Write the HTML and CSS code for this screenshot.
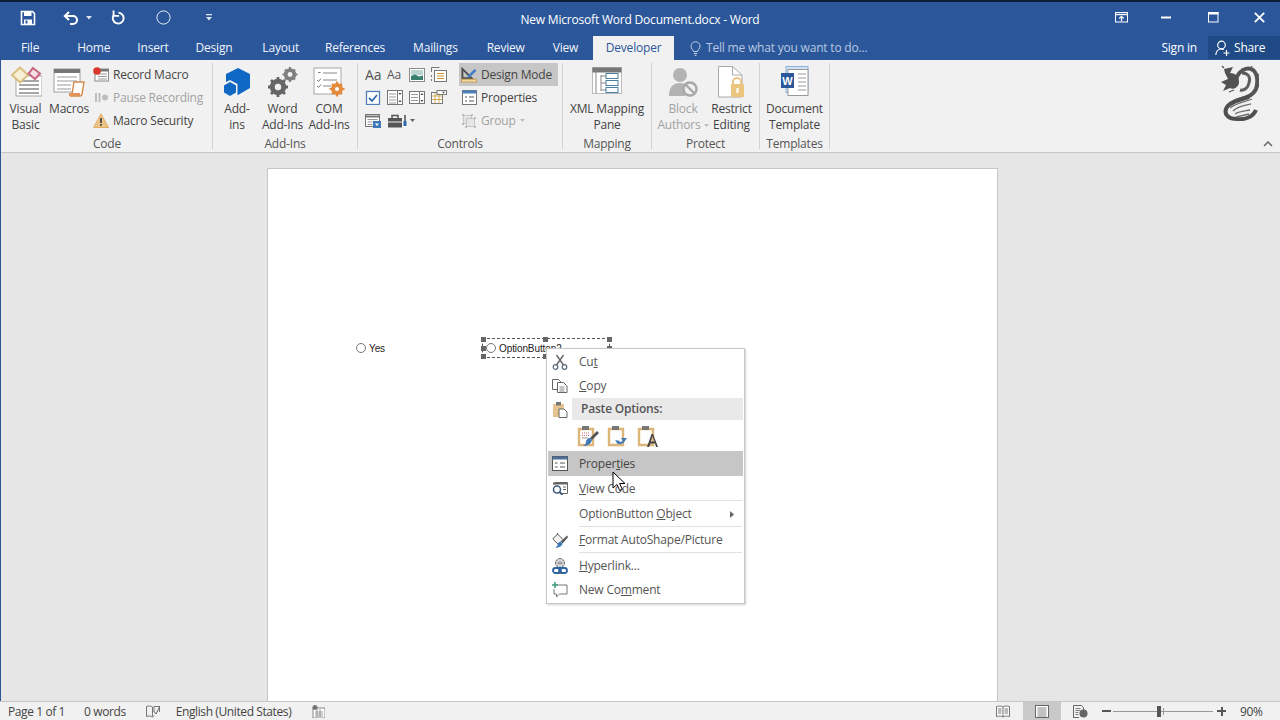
FILE: index.html
```html
<!DOCTYPE html>
<html lang="en">
<head>
<meta charset="utf-8">
<title>New Microsoft Word Document.docx - Word</title>
<link rel="stylesheet" href="styles.css">
</head>
<body>
<div class="app">
  <header class="titlebar">
    <div class="qat">
      <svg class="q q-save" width="16" height="16" viewBox="0 0 16 16"><path d="M1.5 1.5h11l2 2v11h-13z" fill="none" stroke="#fff" stroke-width="1.6"/><rect x="4" y="1.5" width="7.5" height="4.5" fill="#fff"/><rect x="4" y="9.5" width="8" height="5" fill="#fff"/><rect x="5.5" y="10.5" width="2" height="3" fill="#2b579a"/></svg>
      <svg class="q q-undo" width="16" height="14" viewBox="0 0 16 14"><path d="M6 1 1.800 5 6 9M2 5h8a4 4 0 0 1 0 8H7" fill="none" stroke="#fff" stroke-width="2"/></svg>
      <svg class="q q-drop" width="6" height="4" viewBox="0 0 6 4"><path d="M0 0h6L3 3.500z" fill="#dfe6f2"/></svg>
      <svg class="q q-redo" width="14" height="15" viewBox="0 0 14 15"><path d="M7.500 2.800A5.400 5.400 0 1 1 2.600 5.400" fill="none" stroke="#fff" stroke-width="1.900"/><path d="M1.600 .5h1.900v4.400h4.600v1.900H1.600z" fill="#fff"/></svg>
      <svg class="q q-circle" width="15" height="15" viewBox="0 0 15 15"><circle cx="7.500" cy="7.500" r="6.600" fill="none" stroke="#e4eaf4" stroke-width="1"/></svg>
      <svg class="q q-cust" width="6" height="7" viewBox="0 0 6 7"><path d="M0 0h6v1.200H0zM0 3h6L3 6.500z" fill="#dfe6f2"/></svg>
    </div>
    <div class="doc-title">New Microsoft Word Document.docx - Word</div>
    <div class="winctl">
      <svg width="14" height="11" viewBox="0 0 14 11"><rect x=".5" y=".5" width="12" height="9.500" fill="none" stroke="#fff"/><path d="M.5 2.500h12" stroke="#fff" stroke-width="1.400"/><path d="M6.500 9.500V4.500M4.300 6.500l2.200-2.200 2.200 2.200" fill="none" stroke="#fff" stroke-width="1.200"/></svg>
      <svg width="10" height="3" viewBox="0 0 10 3"><rect width="10" height="2" y=".5" fill="#fff"/></svg>
      <svg width="11" height="11" viewBox="0 0 11 11"><rect x=".5" y=".5" width="9.500" height="9.500" fill="none" stroke="#fff"/><rect x="0" y="0" width="10.500" height="2.500" fill="#fff"/></svg>
      <svg width="11" height="11" viewBox="0 0 11 11"><path d="M.8.800l9.400 9.400M10.200.800.800 10.200" stroke="#fff" stroke-width="1.800"/></svg>
    </div>
  </header>
  <nav class="tabs">
    <span class="tab t-file">File</span>
    <span class="tab t-home">Home</span>
    <span class="tab t-insert">Insert</span>
    <span class="tab t-design">Design</span>
    <span class="tab t-layout">Layout</span>
    <span class="tab t-ref">References</span>
    <span class="tab t-mail">Mailings</span>
    <span class="tab t-review">Review</span>
    <span class="tab t-view">View</span>
    <span class="tab active">Developer</span>
    <svg class="bulb" width="11" height="15" viewBox="0 0 11 15"><path d="M3.500 10.500C3 8.500 1 7.800 1 5.200a4.500 4.500 0 0 1 9 0c0 2.600-2 3.300-2.500 5.300zM3.800 12.500h3.400M4.500 14.300h2" fill="none" stroke="#c3d0e6" stroke-width="1"/></svg>
    <span class="tell">Tell me what you want to do...</span>
    <span class="signin">Sign in</span>
    <span class="share"><svg width="15" height="16" viewBox="0 0 15 16"><circle cx="6.500" cy="5" r="3.800" fill="none" stroke="#fff" stroke-width="1.200"/><path d="M.8 15c.3-3.700 2.300-6 5.700-6 1 0 1.800.2 2.500.6M8.500 13h6M11.500 10v6" fill="none" stroke="#fff" stroke-width="1.200"/></svg>Share</span>
  </nav>
  <section class="ribbon">
    <div class="group g-code">
      <div class="gbody">
        <div class="big w-vb">
          <svg class="ico" width="32" height="32" viewBox="0 0 32 32"><rect x="6" y="10" width="26" height="20" fill="#fff" stroke="#a8a8a8"/><path d="M9 15h20M9 19h20M9 23h20M9 27h20" stroke="#8a8a8a" stroke-width="1.500"/><path d="M10 1.500 18 9 10 16.500 2 9z" fill="#f7efd6" stroke="#d9bf7d" stroke-width="2"/><path d="M23 2l7 5.500-5 5.500-6.500-5.500z" fill="#f6dfe4" stroke="#c8677f" stroke-width="2"/></svg>
          <span>Visual<br>Basic</span>
        </div>
        <div class="big w-mac">
          <svg class="ico" width="32" height="32" viewBox="0 0 32 32"><rect x="1" y="3" width="26" height="23" fill="#fff" stroke="#a0a0a0"/><rect x="1" y="3" width="26" height="4" fill="#777"/><path d="M4 11h20M4 15h20M4 19h14M4 23h14" stroke="#999" stroke-width="1.200"/><path d="M21 16h10l-2 12c-.2 1-1 2-2 2H17c1-.5 1.800-1 2-2z" fill="#fff" stroke="#d68a4a" stroke-width="1.400"/><rect x="16" y="27" width="11" height="3" fill="#e2955b"/></svg>
          <span>Macros</span>
        </div>
        <div class="stack">
          <div class="row"><svg width="16" height="15" viewBox="0 0 16 15"><rect x="2" y="2" width="13.500" height="12" fill="#fff" stroke="#8a8a8a"/><rect x="2" y="2" width="13.500" height="2.500" fill="#777"/><path d="M5 7h9M5 9.500h9M5 12h9" stroke="#999"/><circle cx="4" cy="4" r="3.800" fill="#d9372c"/></svg><span>Record Macro</span></div>
          <div class="row off"><svg width="16" height="15" viewBox="0 0 16 15"><path d="M2 3h2v9H2zM5.500 3h2v9h-2z" fill="#bdbdbd"/><circle cx="12" cy="7.500" r="3" fill="#bdbdbd"/></svg><span>Pause Recording</span></div>
          <div class="row"><svg width="16" height="15" viewBox="0 0 16 15"><path d="M8 .8 15.500 14.500H.5z" fill="#ecc486" stroke="#e0ad63"/><path d="M7.100 5h1.800v5H7.100zM7.100 11h1.800v1.800H7.100z" fill="#444"/></svg><span>Macro Security</span></div>
        </div>
      </div>
      <div class="glabel">Code</div>
    </div>
    <div class="group g-addins">
      <div class="gbody">
        <div class="big w-addin">
          <svg class="ico" width="32" height="32" viewBox="0 0 32 32"><path d="M17 2 29 8v14l-12 7-.5-.3V18L9 14l-4 2V8z" fill="#0f68c4"/><path d="M9 16l6 3.500v7L9 30l-6-3.500v-7z" fill="#0f68c4"/></svg>
          <span>Add-<br>ins</span>
        </div>
        <div class="big w-word">
          <svg class="ico" width="30" height="32" viewBox="0 0 30 32"><circle cx="10" cy="21" r="6" fill="none" stroke="#666" stroke-width="4.500"/><path d="M10 11v20M0 21h20M3 14l14 14M17 14 3 28" stroke="#666" stroke-width="2.800"/><circle cx="10" cy="21" r="3.200" fill="#f1f1f1"/><circle cx="22" cy="8.500" r="4.500" fill="none" stroke="#808080" stroke-width="3.500"/><path d="M22 1v15M14.500 8.500h15M17 3.500l10 10M27 3.500l-10 10" stroke="#808080" stroke-width="2.200"/><circle cx="22" cy="8.500" r="2.400" fill="#f1f1f1"/></svg>
          <span>Word<br>Add-Ins</span>
        </div>
        <div class="big w-com">
          <svg class="ico" width="32" height="32" viewBox="0 0 32 32"><rect x="1" y="2" width="27" height="26" fill="#fff" stroke="#a8a8a8"/><path d="M10 7h14M10 14h14M10 20h8" stroke="#888"/><path d="M5 6.500h2.500M4 14l1.500 1.500L8 12.500M4 20l1.500 1.500L8 18.500" fill="none" stroke="#777"/><circle cx="24" cy="23" r="4.500" fill="none" stroke="#e58a3c" stroke-width="3"/><path d="M24 15.500v15M16.500 23h15M19 18l10 10M29 18 19 28" stroke="#e58a3c" stroke-width="2.200"/><circle cx="24" cy="23" r="2" fill="#fff"/></svg>
          <span>COM<br>Add-Ins</span>
        </div>
      </div>
      <div class="glabel">Add-Ins</div>
    </div>
    <div class="group g-ctrl">
      <div class="gbody">
        <div class="ctrl-grid">
          <span class="aa aa1">Aa</span>
          <span class="aa aa2">Aa</span>
          <svg width="16" height="14" viewBox="0 0 16 14"><rect x=".5" y=".5" width="15" height="13" fill="#fff" stroke="#8a8a8a"/><rect x="2" y="2" width="12" height="5" fill="#b9d5cf"/><path d="M2 12V8l4-1.500 4 2 4-1v4.500z" fill="#3a7f6e"/></svg>
          <svg width="16" height="15" viewBox="0 0 16 15"><rect x="3.500" y="3.500" width="12" height="11" fill="#fff" stroke="#777"/><path d="M6 6.500h7M6 9h7M6 11.500h7" stroke="#c9962f"/><path d="M.5 5V.5h8M.5 8v2M.5 12v2" fill="none" stroke="#777"/></svg>
          <svg width="16" height="15" viewBox="0 0 16 15"><rect x="1.500" y="1.500" width="13" height="13" fill="#fff" stroke="#4f7fb6" stroke-width="1.300"/><path d="M4 8l3 3 5-6" fill="none" stroke="#2f6bad" stroke-width="1.800"/></svg>
          <svg width="16" height="15" viewBox="0 0 16 15"><rect x=".5" y=".5" width="15" height="14" fill="#fff" stroke="#777"/><path d="M10.500.5v14" stroke="#777"/><path d="M2 4h7M2 7h7M2 10h7M2 13h7" stroke="#999"/><path d="M11.500 3h3L13 5zM11.500 12h3L13 10z" fill="#444"/></svg>
          <svg width="16" height="15" viewBox="0 0 16 15"><rect x=".5" y="1.500" width="15" height="12" fill="#fff" stroke="#777"/><path d="M10.500 1.500v12" stroke="#777"/><path d="M2 4.500h7M2 7.500h7M2 10.500h7" stroke="#999"/><path d="M11.500 5h3L13 3zM11.500 10h3L13 12z" fill="#444"/></svg>
          <svg width="16" height="15" viewBox="0 0 16 15"><rect x=".5" y="2.500" width="11" height="11" fill="#fff" stroke="#777"/><path d="M.5 6h11M.5 9.500h11M4 2.500v11M8 2.500v11" stroke="#c9962f" stroke-width=".8"/><rect x="6" y=".5" width="9.500" height="4" fill="#fff" stroke="#777"/><path d="M11 1.800h3l-1.500 1.700z" fill="#444"/></svg>
          <svg width="16" height="15" viewBox="0 0 16 15"><rect x=".5" y="1.500" width="14" height="12" fill="#fff" stroke="#777"/><path d="M.5 3.500h14" stroke="#777" stroke-width="2"/><path d="M2.500 6.500h10M2.500 9h5M2.500 11.500h5" stroke="#999"/><rect x="8" y="8" width="8" height="7" fill="#3d78b8"/><path d="M10 10.500h4L12 13z" fill="#fff"/></svg>
          <span class="tools"><svg width="16" height="14" viewBox="0 0 16 14"><path d="M1 4h14v9.500H1z" fill="#555"/><path d="M5 4V1.500h6V4" fill="none" stroke="#555" stroke-width="1.500"/><path d="M1 8h14" stroke="#f1f1f1"/></svg><svg width="4" height="11" viewBox="0 0 4 11"><path d="M1 0h2v6H1z" fill="#777"/><path d="M.5 6h3v5h-3z" fill="#2f6bad"/></svg><svg class="car" width="5" height="3" viewBox="0 0 5 3"><path d="M0 0h5L2.500 3z" fill="#666"/></svg></span>
        </div>
        <div class="stack s-design">
          <div class="row on"><svg width="17" height="16" viewBox="0 0 17 16"><path d="M1.500 1.500v10h10z" fill="none" stroke="#4d4d4d" stroke-width="2"/><path d="M7.500 8.500 14.500 1.500l2 2-7 7-3 .8z" fill="#3f7fc4"/><rect x=".5" y="12.500" width="16" height="3" fill="#f0d9a8" stroke="#c89d4c"/></svg><span>Design Mode</span></div>
          <div class="row r-prop"><svg width="15" height="15" viewBox="0 0 15 15"><rect x=".5" y=".5" width="14" height="14" fill="#fff" stroke="#777"/><rect x=".5" y=".5" width="14" height="3" fill="#4a7fb8"/><path d="M3 7h2M7 7h5M3 11h2M7 11h5" stroke="#555"/></svg><span>Properties</span></div>
          <div class="row off r-group"><svg width="16" height="15" viewBox="0 0 16 15"><rect x="2.500" y="2.500" width="8" height="8" fill="#e6e6e6" stroke="#c4c4c4"/><rect x="5.500" y="5.500" width="8" height="8" fill="#e6e6e6" stroke="#c4c4c4"/><path d="M1 1h2v2H1zM10 1h2v2h-2zM1 10h2v2H1zM13 13h2v2h-2zM13 4h2v2h-2zM4 13h2v2H4z" fill="#bdbdbd"/></svg><span>Group</span><svg class="car" width="5" height="3" viewBox="0 0 5 3"><path d="M0 0h5L2.500 3z" fill="#bdbdbd"/></svg></div>
        </div>
      </div>
      <div class="glabel">Controls</div>
    </div>
    <div class="group g-map">
      <div class="gbody">
        <div class="big w-xml">
          <svg class="ico" width="30" height="30" viewBox="0 0 30 30"><rect x=".5" y=".5" width="29" height="26" fill="#fff" stroke="#bbb"/><rect x=".5" y=".5" width="29" height="5" fill="#777"/><path d="M4 2v24M9 8v16M9 9h5M9 16h5M9 23h5" stroke="#888" fill="none"/><rect x="14" y="6.500" width="12" height="5" fill="#fff" stroke="#4a7fa0"/><rect x="14" y="13.500" width="12" height="5" fill="#fff" stroke="#4a7fa0"/><rect x="14" y="20.500" width="12" height="5" fill="#fff" stroke="#4a7fa0"/></svg>
          <span>XML Mapping<br>Pane</span>
        </div>
      </div>
      <div class="glabel">Mapping</div>
    </div>
    <div class="group g-prot">
      <div class="gbody">
        <div class="big w-block off">
          <svg class="ico" width="30" height="32" viewBox="0 0 30 32"><circle cx="12" cy="9" r="7" fill="#b3b3b3"/><path d="M1 30c0-9 4-13 11-13 3 0 5 .7 7 2l-2 11z" fill="#b3b3b3"/><circle cx="22" cy="23" r="6.500" fill="#f1f1f1" stroke="#a8a8a8" stroke-width="2.400"/><path d="M18 19l8 8" stroke="#a8a8a8" stroke-width="2.400"/></svg>
          <span>Block<br>Authors<svg class="car" width="5" height="3" viewBox="0 0 5 3"><path d="M0 0h5L2.500 3z" fill="#bdbdbd"/></svg></span>
        </div>
        <div class="big w-restrict">
          <svg class="ico" width="28" height="32" viewBox="0 0 28 32"><path d="M.5.500h14L24 9v22H.5z" fill="#fff" stroke="#aaa"/><path d="M14.500.500V9H24" fill="none" stroke="#aaa"/><path d="M15 19v-3a4 4 0 0 1 8 0v3" fill="none" stroke="#ecc486" stroke-width="2"/><rect x="13" y="18" width="13" height="13" fill="#ecc67f"/><rect x="18.500" y="22" width="2" height="5" fill="#fff"/></svg>
          <span>Restrict<br>Editing</span>
        </div>
      </div>
      <div class="glabel">Protect</div>
    </div>
    <div class="group g-tpl">
      <div class="gbody">
        <div class="big w-doc">
          <svg class="ico" width="28" height="32" viewBox="0 0 28 32"><rect x="5" y=".5" width="22" height="26" fill="#cfe0f2" stroke="#8fb2d8"/><rect x="7" y="3.500" width="20" height="26" fill="#fff" stroke="#999"/><path d="M17 8h8M17 12h8M17 16h8M17 20h8M17 24h8" stroke="#999"/><rect x="0" y="7" width="13" height="15" fill="#2b579a"/><text x="6.500" y="19" class="wlogo" text-anchor="middle">W</text></svg>
          <span>Document<br>Template</span>
        </div>
      </div>
      <div class="glabel">Templates</div>
    </div>
    <div class="ribbon-end">
      <svg class="dragon" width="38" height="56" viewBox="0 0 38 56"><g fill="none"><path d="M15 15C17 6 26 1 32 5c5 4 5 13 3 19-3 7-11 9-20 12" stroke="#555" stroke-width="4"/><path d="M21 8c6 0 9 4 7 10-1 5-5 8-9 7" stroke="#5e5e5e" stroke-width="3"/><path d="M28 32C16 35 7 38 5 44c-2 6 3 10 11 10 8 1 16-2 19-9" stroke="#4f4f4f" stroke-width="4"/><path d="M9 43c6-5 15-6 22-9M12 46c5-5 12-6 18-7M14 49c5-3 11-3 15-4M15 52c5-1 9-2 13-3" stroke="#707070" stroke-width="1.300"/><path d="M24 10l-3-7M29 4l2-3M36 12l2-3M37 20l1 2M8 27l5-2M3 3 1 1" stroke="#555" stroke-width="1.300"/></g><path d="M3 4l9-2-3 6c6 0 9 4 9 9s-5 8-9 6l-7 3 3-6-5-3 7-3-3-6z" fill="#525252"/></svg>
      <svg class="collapse" width="10" height="6" viewBox="0 0 10 6"><path d="M1 5l4-4 4 4" fill="none" stroke="#666" stroke-width="1.500"/></svg>
    </div>
  </section>
  <main class="canvas">
    <article class="page">
      <div class="controls">
        <div class="opt opt-yes"><span class="radio"></span><span class="optxt">Yes</span></div>
        <div class="opt opt-sel">
          <span class="radio"></span><span class="optxt">OptionButton2</span>
          <i class="h h1"></i><i class="h h2"></i><i class="h h3"></i><i class="h h4"></i><i class="h h5"></i><i class="h h6"></i><i class="h h7"></i>
        </div>
      </div>
    </article>
    <div class="menu">
      <div class="mi"><svg width="16" height="16" viewBox="0 0 16 16"><circle cx="3.500" cy="13" r="2.300" fill="none" stroke="#5a6a80" stroke-width="1.200"/><circle cx="12.500" cy="13" r="2.300" fill="none" stroke="#5a6a80" stroke-width="1.200"/><path d="M4.500 11 11.500 1M11.500 11 4.500 1" stroke="#666" stroke-width="1.400"/></svg><span>Cu<u>t</u></span></div>
      <div class="mi"><svg width="16" height="14" viewBox="0 0 16 14"><path d="M.5.500h6l2 2v8h-8z" fill="#fff" stroke="#666"/><path d="M5.500 3.500h6l3.500 3.500v6.500H5.500z" fill="#fff" stroke="#666"/><path d="M7.500 8h5M7.500 10h5M7.500 12h5" stroke="#888"/></svg><span><u>C</u>opy</span></div>
      <div class="mi mi-paste">
        <svg width="16" height="17" viewBox="0 0 16 17"><rect x="1" y="3" width="11" height="13" fill="#e6c48f"/><rect x="4" y="1" width="5" height="3.500" fill="#777"/><path d="M7 8h5l3 3v5.500H7z" fill="#fff" stroke="#666"/></svg>
        <span class="paste-head">Paste Options:</span>
      </div>
      <div class="paste-row">
        <svg width="22" height="22" viewBox="0 0 22 22"><path d="M2 4h14v16H2z" fill="#fff" stroke="#dcb678" stroke-width="2.400"/><rect x="5" y="1" width="7" height="4" fill="#777"/><path d="M5 8h8M5 10.500h8" stroke="#c87070" stroke-dasharray="1 1"/><path d="M5 13h6" stroke="#999"/><path d="M20 6l2 2-7 7-2-2z" fill="#555"/><path d="M13 13l2 2c-1 4-5 6-9 6 2-1 3-2 3-4 0-2 2-4 4-4z" fill="#3d78b8"/></svg>
        <svg width="22" height="22" viewBox="0 0 22 22"><path d="M2 4h14v16H2z" fill="#fff" stroke="#dcb678" stroke-width="2.400"/><rect x="5" y="1" width="7" height="4" fill="#777"/><path d="M10 17c3 2 6 1 7-2" fill="none" stroke="#3d78b8" stroke-width="2"/><path d="M14 13h6l-3 4zM8 15l3 4 2-3z" fill="#3d78b8"/></svg>
        <svg width="22" height="22" viewBox="0 0 22 22"><path d="M2 4h14v16H2z" fill="#fff" stroke="#dcb678" stroke-width="2.400"/><rect x="5" y="1" width="7" height="4" fill="#777"/><path d="M10 22l4.500-13h1.500L21 22h-2l-1-3.500h-4.500L12 22zM14 16.500h3.500L15.500 11z" fill="#444"/></svg>
      </div>
      <div class="mi hot"><svg width="16" height="15" viewBox="0 0 16 15"><rect x=".5" y=".5" width="15" height="14" fill="#fff" stroke="#555"/><rect x=".5" y=".5" width="15" height="3" fill="#4a6f98"/><path d="M3 7h2.500M8 7h5M3 11h2.500M8 11h5" stroke="#555"/></svg><span>Proper<u>t</u>ies</span></div>
      <div class="mi sep m25"><svg width="16" height="13" viewBox="0 0 16 13"><path d="M3 3V.5h12.500v11H10" fill="none" stroke="#666"/><path d="M1 .5h14v2H1z" fill="#666"/><path d="M11 5h3M11 7.500h3" stroke="#666"/><circle cx="5" cy="7.500" r="3.500" fill="#fff" stroke="#3c5a7c" stroke-width="1.500"/><path d="M7.500 10l3 3" stroke="#3c5a7c" stroke-width="1.800"/></svg><span><u>V</u>iew Code</span></div>
      <div class="mi sep"><span class="noicon"></span><span>OptionButton <u>O</u>bject</span><svg class="sub" width="4" height="7" viewBox="0 0 4 7"><path d="M0 0l4 3.500L0 7z" fill="#666"/></svg></div>
      <div class="mi sep"><svg width="16" height="15" viewBox="0 0 16 15"><path d="M.8 6 5.500 1l5.500 5.500-4.500 5z" fill="#f4f4f4" stroke="#555"/><path d="M5.500 1V0" stroke="#555"/><path d="M15 2.500 9 8.500l1.700 1.700 5.300-6z" fill="#555"/><path d="M8.700 8.800l2 1.800C10 13.500 6.500 15 3 14.800c1.300-.8 2.500-1.800 2.700-3.300.2-1.500 1.500-2.700 3-2.700z" fill="#3d78b8"/></svg><span><u>F</u>ormat AutoShape/Picture</span></div>
      <div class="mi m25"><svg width="16" height="16" viewBox="0 0 16 16"><circle cx="8" cy="5" r="4.500" fill="#fff" stroke="#777"/><path d="M3.500 5h9M8 .5v9M5 2c2 2 2 4 0 6M11 2c-2 2-2 4 0 6" fill="none" stroke="#777" stroke-width=".8"/><rect x="1" y="10" width="8" height="5" rx="2.500" fill="none" stroke="#2f62a0" stroke-width="1.800"/><rect x="7" y="10" width="8" height="5" rx="2.500" fill="none" stroke="#2f62a0" stroke-width="1.800"/></svg><span><u>H</u>yperlink...</span></div>
      <div class="mi"><svg width="16" height="16" viewBox="0 0 16 16"><path d="M4.500 3H15v9H7.500l-3 3v-3H2V7" fill="none" stroke="#777"/><path d="M3 0v6M0 3h6" stroke="#3f9c7e" stroke-width="1.600"/></svg><span>New Co<u>m</u>ment</span></div>
    </div>
    <svg class="cursor" width="14" height="21" viewBox="0 0 14 21"><path d="M1 1v16l4-3.500 2.700 6 2.600-1.100-2.700-5.900H13z" fill="#fff" stroke="#000"/></svg>
  </main>
  <footer class="status">
    <span class="st st-page">Page 1 of 1</span>
    <span class="st st-words">0 words</span>
    <svg class="st-book" width="14" height="13" viewBox="0 0 14 13"><path d="M6.500 2C5 .8 2.500.8.500 1.500v10c2-.7 4.500-.7 6 .5 .5-.5 1-.8 2-1" fill="none" stroke="#777"/><path d="M6.500 2v9.500M8 7V1.500h5.500V7" fill="none" stroke="#777"/><path d="M8 6.500l2 2.500 4-8" fill="none" stroke="#666"/></svg>
    <span class="st st-lang">English (United States)</span>
    <svg class="st-mac" width="13" height="13" viewBox="0 0 13 13"><rect x="1" y="3" width="12" height="10" fill="#fff" stroke="#888"/><path d="M3 7h8M3 9h8M3 11h8M5 4v8M8 4v8" stroke="#888" stroke-width=".8"/><circle cx="3" cy="2.500" r="2.500" fill="#777"/></svg>
    <div class="st-right">
      <svg class="v-read" width="14" height="13" viewBox="0 0 14 13"><path d="M7 2C5.500.8 3 .8.500 1.500v10c2.500-.7 5-.7 6.500.5 1.500-1.200 4-1.200 6.500-.5v-10C11 .8 8.500.8 7 2zM7 2v10M2 4h3.500M2 6h3.500M2 8h3.500M8.500 4H12M8.500 6H12M8.500 8H12" fill="#fff" stroke="#666" stroke-width=".9"/></svg>
      <span class="v-print"><svg width="14" height="13" viewBox="0 0 14 13"><rect x=".5" y=".5" width="13" height="12" fill="#fff" stroke="#666"/><path d="M2.500 3h9M2.500 5h9M2.500 7h9M2.500 9h9M2.500 11h9" stroke="#666" stroke-width=".8"/></svg></span>
      <svg class="v-web" width="15" height="13" viewBox="0 0 15 13"><path d="M.5.500h8l2 2v3M6 12.500H.5V.500" fill="none" stroke="#666"/><path d="M2.500 3.500h5M2.500 5.500h5M2.500 7.500h3M2.500 9.500h3" stroke="#666" stroke-width=".8"/><circle cx="10.500" cy="8.500" r="4" fill="#666"/></svg>
      <span class="zmin"></span>
      <span class="slider"><i class="tick"></i><i class="thumb"></i></span>
      <span class="zplus"></span>
      <span class="st zoomv">90%</span>
    </div>
  </footer>
</div>
</body>
</html>
```
FILE: styles.css
```css
* { box-sizing: border-box; }
html, body { margin: 0; height: 100%; overflow: hidden; }
body { font: 12px/16px "Open Sans", "Liberation Sans", sans-serif; letter-spacing: -.2px; color: #444; }
.app { width: 1280px; height: 720px; display: flex; flex-direction: column; background: #e6e6e6; border-left: 1px solid #2b579a; }

.titlebar { height: 36px; flex: none; background: #2b579a; border-top: 2px solid #0e1d3c; margin-left: -1px; position: relative; display: flex; align-items: center; color: #fff; }
.qat { display: flex; align-items: center; padding: 0 0 3px 20px; }
.q { flex: none; }
.q-undo { margin-left: 27px; }
.q-drop { margin-left: 7px; }
.q-redo { margin-left: 19px; }
.q-circle { margin-left: 31px; }
.q-cust { margin-left: 35px; }
.doc-title { position: absolute; left: 0; right: 0; top: 10px; text-align: center; color: #fff; }
.winctl { margin-left: auto; display: flex; align-items: center; padding: 0 15px 3px 0; }
.winctl svg:nth-child(1) { margin-right: 32px; }
.winctl svg:nth-child(2) { margin-right: 37px; }
.winctl svg:nth-child(3) { margin-right: 35px; }

.tabs { height: 24px; flex: none; background: #2b579a; margin-left: -1px; display: flex; align-items: center; color: #fff; }
.tab { flex: none; color: #f0f4fa; }
.t-file { margin-left: 21px; }
.t-home { margin-left: 38px; }
.t-insert { margin-left: 27px; }
.t-design { margin-left: 27px; }
.t-layout { margin-left: 30px; }
.t-ref { margin-left: 26px; }
.t-mail { margin-left: 28px; }
.t-review { margin-left: 29px; }
.t-view { margin-left: 28px; }
.tab.active { margin-left: 15px; width: 81px; height: 24px; line-height: 24px; text-align: center; background: #f1f1f1; color: #2b579a; }
.bulb { margin-left: 16px; flex: none; }
.tell { margin-left: 5px; color: #b9c8e0; }
.signin { margin-left: auto; }
.share { margin-left: 11px; width: 72px; height: 23px; margin-bottom: 1px; padding-left: 7px; display: flex; align-items: center; gap: 4px; background: #1f4a85; }

.ribbon { height: 93px; flex: none; background: #f1f1f1; border-bottom: 1px solid #c6c6c6; padding: 3px 0 0 1px; display: flex; }
.group { display: flex; flex-direction: column; height: 86px; border-right: 1px solid #d2d2d2; flex: none; }
.g-code { width: 211px; }
.g-addins { width: 145px; }
.g-ctrl { width: 205px; }
.g-map { width: 89px; }
.g-prot { width: 108px; }
.g-tpl { width: 70px; }
.gbody { height: 73px; display: flex; flex: none; }
.glabel { text-align: center; color: #555; line-height: 16px; }
.big { flex: none; display: flex; flex-direction: column; align-items: center; text-align: center; line-height: 16px; height: 73px; }
.big .ico { flex: none; height: 32px; margin: 3px 0; }
.big span { white-space: nowrap; }
.off, .off span { color: #a3a3a3; }
.w-vb { width: 47px; }
.w-mac { width: 40px; }
.w-addin { width: 46px; margin-left: 1px; }
.w-word { width: 45px; }
.w-com { width: 48px; }
.w-xml { width: 88px; }
.w-block { width: 50px; margin-left: 6px; }
.w-restrict { width: 47px; }
.w-doc { width: 69px; }
.car { margin-left: 3px; vertical-align: middle; }

.stack { display: flex; flex-direction: column; }
.row { height: 23px; display: flex; align-items: center; gap: 4px; padding: 0 6px 0 2px; white-space: nowrap; }
.g-code .stack { margin-left: 2px; }
.row.on { background: #c6c6c6; }
.r-prop { padding-left: 3px; }
.r-group { padding-left: 2px; }
.r-group .car { margin-left: 0; }
.s-design { margin-left: 3px; width: 99px; }

.ctrl-grid { width: 98px; padding: 0 0 0 7px; display: grid; grid-template-columns: repeat(4, 22px); grid-template-rows: repeat(3, 23px); align-items: center; justify-items: start; }
.aa { font-size: 14px; color: #555; letter-spacing: 0; }
.aa2 { font-size: 12px; font-weight: 400; }
.tools { grid-column: span 2; display: flex; align-items: center; gap: 0; }

.ribbon-end { flex: 1; position: relative; }
.dragon { position: absolute; left: 391px; top: 2px; filter: blur(.45px); }
.collapse { position: absolute; left: 433px; top: 78px; }

.canvas { flex: 1; position: relative; display: flex; justify-content: center; padding: 15px 16px 0 0; background: #e6e6e6; overflow: hidden; }
.page { width: 731px; background: #fff; border: 1px solid #c6c6c6; border-bottom: 0; color: #222; }
.controls { display: flex; padding: 169px 0 0 88px; font: 10px/14px "Liberation Sans", sans-serif; letter-spacing: 0; }
.opt { display: flex; align-items: center; gap: 3px; height: 20px; position: relative; }
.optxt { padding-top: 1px; letter-spacing: -.1px; }
.opt-yes { width: 128px; }
.opt-sel { width: 128px; height: 20px; border: 1px dashed #555; padding-left: 3px; margin-left: -2px; }
.radio { width: 10px; height: 10px; border-radius: 50%; border: 1px solid #777; background: #fff; flex: none; }
.h { position: absolute; width: 5px; height: 5px; background: #666; }
.h1 { left: -2px; top: -2px; }
.h2 { left: 60px; top: -2px; }
.h3 { right: -3px; top: -2px; }
.h4 { left: -2px; top: 7px; }
.h5 { right: -3px; top: 7px; }
.h6 { left: -2px; bottom: -2px; }
.h7 { left: 60px; bottom: -2px; }

.menu { position: absolute; left: 545px; top: 195px; width: 199px; height: 256px; background: #fff; border: 1px solid #c6c6c6; box-shadow: 1px 1px 2px rgba(0,0,0,.18); padding: 1px; display: flex; flex-direction: column; color: #555; }
.mi { flex: none; height: 24px; display: flex; align-items: center; position: relative; }
.mi > svg:first-child, .noicon { flex: none; margin-left: 4px; width: 16px; }
.mi > svg:first-child + span, .noicon + span { position: absolute; left: 31px; }
.mi.sep { height: 26px; }
.mi.m25 { height: 25px; }
.mi.sep::after { content: ""; position: absolute; left: 31px; right: 1px; bottom: 0; height: 1px; background: #e1e1e1; }
.mi.hot { height: 25px; background: #c6c6c6; color: #444; }
.mi-paste { height: 22px; margin-bottom: 3px; }
.mi > svg:first-child + span.paste-head { left: 24px; right: 0; height: 22px; line-height: 21px; padding-left: 9px; background: #e9e9e9; font-weight: 600; color: #555; }
.paste-row { flex: none; height: 28px; padding: 0 0 2px 29px; display: flex; gap: 8px; align-items: center; }
.sub { position: absolute; right: 9px; top: 10px; }
.cursor { position: absolute; left: 611px; top: 318px; }

.status { height: 19px; flex: none; background: #f1f1f1; border-top: 1px solid #c6c6c6; display: flex; align-items: center; color: #444; margin-left: -1px; position: relative; z-index: 1; }
.st { flex: none; letter-spacing: -.4px; padding-top: 2px; }
.st-page { margin-left: 8px; }
.st-words { margin-left: 19px; }
.st-book { margin-left: 20px; flex: none; }
.st-lang { margin-left: 16px; }
.st-mac { margin-left: 21px; flex: none; }
.st-right { margin-left: auto; display: flex; align-items: center; height: 18px; }
.v-read { flex: none; }
.v-print { width: 38px; height: 18px; margin-left: 13px; background: #c9c9c9; display: flex; align-items: center; justify-content: center; }
.v-web { margin-left: 12px; flex: none; }
.zmin, .zplus { width: 9px; height: 9px; flex: none; background: linear-gradient(#555,#555) center/9px 2px no-repeat; }
.zmin { margin-left: 14px; }
.zplus { background: linear-gradient(#555,#555) center/9px 2px no-repeat, linear-gradient(#555,#555) center/2px 9px no-repeat; margin-left: 4px; }
.slider { width: 100px; height: 1px; margin-left: 2px; background: #999; position: relative; }
.tick { position: absolute; left: 50px; top: -3px; width: 1px; height: 7px; background: #999; }
.thumb { position: absolute; left: 44px; top: -5px; width: 4px; height: 11px; background: #555; }
.zoomv { margin-left: 14px; width: 40px; }
.wlogo { font: 700 11px "Liberation Sans", sans-serif; fill: #fff; letter-spacing: 0; }
```
